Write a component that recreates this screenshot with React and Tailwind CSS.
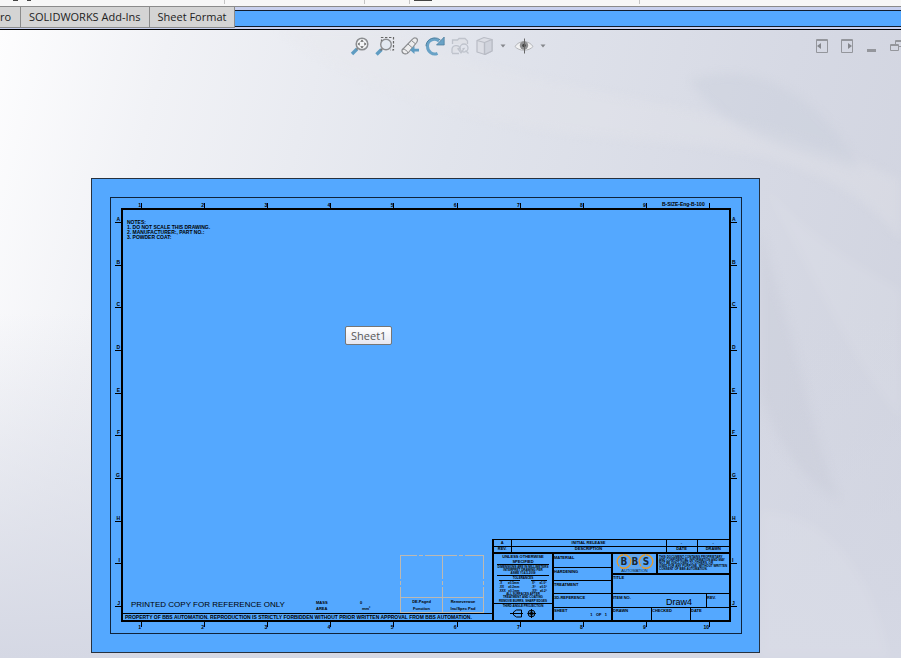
import React, { useState } from 'react';

const TABS = ['Evaluate Pro', 'SOLIDWORKS Add-Ins', 'Sheet Format'];
const COLUMNS = ['1', '2', '3', '4', '5', '6', '7', '8', '9', '10'];
const ROWS = ['A', 'B', 'C', 'D', 'E', 'F', 'G', 'H', 'I', 'J'];

const MATERIAL_FIELDS = [
  { label: 'MATERIAL', height: 'h-[14px]' },
  { label: 'HARDENING', height: 'h-[13px]' },
  { label: 'TREATMENT', height: 'h-[13px]' },
  { label: '3D-REFERENCE', height: 'h-[14px]' },
];

function ZoomFitIcon() {
  return (
    <svg width="20" height="20" viewBox="0 0 20 20" fill="none">
      <path d="M2 18l5-5" stroke="#5f9cc2" strokeWidth="3.4" />
      <path d="M6.5 13.5l2-2" stroke="#777" strokeWidth="1.6" />
      <circle cx="12" cy="8" r="5.8" fill="#f3f4f6" stroke="#8b8d90" strokeWidth="1.5" />
      <path d="M12 3.5l1.8 2.2h-3.6zM12 12.5l1.8-2.2h-3.6zM7.5 8l2.2-1.8v3.6zM16.5 8l-2.2-1.8v3.6z" fill="#666" />
    </svg>
  );
}

function ZoomAreaIcon() {
  return (
    <svg width="20" height="20" viewBox="0 0 20 20" fill="none">
      <path d="M6.5 6V1.5H18.5V14H15" stroke="#666" strokeWidth="1.2" strokeDasharray="2.4 1.6" />
      <path d="M1.5 18.5l5-5" stroke="#5f9cc2" strokeWidth="3.4" />
      <path d="M5.5 14.5l2-2" stroke="#777" strokeWidth="1.6" />
      <circle cx="11" cy="8.5" r="5.3" fill="#e3e9f2" stroke="#8b8d90" strokeWidth="1.4" />
    </svg>
  );
}

function PreviousViewIcon() {
  return (
    <svg width="20" height="20" viewBox="0 0 20 20" fill="none">
      <path d="M2 14L12.500 3.200C13.500 1.800 15 1.500 16.500 2.300c1.300 1 1.200 2.500.3 4L8.500 16.500C6.500 19 1.500 18 2 14z" fill="#ededee" stroke="#898b8e" strokeWidth="1.1" />
      <path d="M8 8l4 3.500M11.500 4.500l3.800 3.200M2.500 13c2.500 0 4.500 1.500 5.500 4" stroke="#898b8e" />
      <path d="M10 14l4.500-4v2.700H19v2.700h-4.500V18z" fill="#5f9cc2" />
    </svg>
  );
}

function RedrawIcon() {
  return (
    <svg width="20" height="20" viewBox="0 0 20 20" fill="none">
      <path d="M12.500 17.300C8 19.500 2.500 16 2.500 10.200 2.500 4.500 8.500 1.300 14 5" stroke="#69a2c6" strokeWidth="3" />
      <path d="M1 10.200C1 4.500 6.500 .8 12.500 2.300L15.500 4" stroke="#47799a" strokeWidth=".9" />
      <path d="M19.200 1v8h-7.700z" fill="#69a2c6" stroke="#47799a" strokeWidth=".7" />
    </svg>
  );
}

function SectionViewIcon() {
  return (
    <svg width="20" height="20" viewBox="0 0 20 20" fill="none" stroke="#bfc3cc" strokeWidth="1.3">
      <path d="M2.500 8V4h5l1.500-1.500h6L17.500 5v3" fill="#dfe1e7" />
      <path d="M2 17v-3.500c0-4.500 7-5.500 8-1l-2 .5 3 4 3-4.500-1.500.2" fill="#dfe1e7" />
      <circle cx="14" cy="12" r="4" />
      <path d="M15.500 14.500l3 3M2 17.500h7" />
    </svg>
  );
}

function DisplayStyleIcon() {
  return (
    <svg width="20" height="20" viewBox="0 0 20 20" stroke="#b9bcc5" strokeWidth="1.2" strokeLinejoin="round">
      <path d="M2 4.500L9 1.500l8 2V15l-7 3.500-8-2.500z" fill="#dcdee5" />
      <path d="M9.500 6.500L17 3.500V15l-7.500 3.500z" fill="#d0d3dc" />
      <path d="M2 4.500l7.500 2V18.500" fill="none" />
    </svg>
  );
}

function VisibilityIcon() {
  return (
    <svg width="20" height="20" viewBox="0 0 20 20">
      <path d="M1 10.500C5 4 15 4 19 10.500 15 15.500 5 15.500 1 10.500z" fill="#f1f1f2" stroke="#b4b6ba" />
      <circle cx="10" cy="9.500" r="4.200" fill="#8f9092" />
      <circle cx="10" cy="9.500" r="1.800" fill="#444" />
      <path d="M10.500 2.500v15" stroke="#666" />
    </svg>
  );
}

function Caret() {
  return (
    <svg width="6" height="4" viewBox="0 0 6 4">
      <path d="M.5 .5h5L3 3.500z" fill="#85878c" />
    </svg>
  );
}

function PaneIcon({ flip }) {
  return (
    <svg width="12" height="14" viewBox="0 0 12 14" fill="none">
      <path d="M.5 .5h11v13H.5z" stroke="#94969c" />
      <path d="M1 1.500h10" stroke="#94969c" />
      {flip ? <path d="M7 4v6l4-3z" fill="#85878d" /> : <path d="M5 4v6L1 7z" fill="#85878d" />}
    </svg>
  );
}

function HeadsUpToolbar() {
  return (
    <div className="flex items-center pr-[5px]" role="toolbar" aria-label="View">
      <div className="flex items-center gap-[5px]">
        <button aria-label="Zoom to Fit"><ZoomFitIcon /></button>
        <button aria-label="Zoom to Area"><ZoomAreaIcon /></button>
        <button aria-label="Previous View"><PreviousViewIcon /></button>
        <button aria-label="Redraw"><RedrawIcon /></button>
        <button aria-label="Section View"><SectionViewIcon /></button>
        <button aria-label="Display Style"><DisplayStyleIcon /></button>
      </div>
      <button aria-label="Display Style options" className="px-[5px] py-2"><Caret /></button>
      <button aria-label="Hide/Show Items" className="ml-[3px]"><VisibilityIcon /></button>
      <button aria-label="Hide/Show options" className="pl-[6px] py-2"><Caret /></button>
    </div>
  );
}

function WindowControls() {
  return (
    <div className="flex items-center justify-end gap-[13px] -mr-[7px]">
      <button aria-label="Collapse left pane"><PaneIcon /></button>
      <button aria-label="Collapse right pane"><PaneIcon flip /></button>
      <button aria-label="Minimize">
        <svg width="11" height="14" viewBox="0 0 11 14"><path d="M1 10h9v3H1z" fill="#94969c" /></svg>
      </button>
      <button aria-label="Restore">
        <svg width="18" height="14" viewBox="0 0 18 14" fill="none" stroke="#94969c">
          <path d="M.5 5.500h8v6h-8zM.5 6.500h8M5.500 5V1.500h12v6H9M5.500 2.500h12" />
        </svg>
      </button>
    </div>
  );
}

// Soft light streaks behind the sheet
function Backdrop() {
  return (
    <div className="absolute inset-0 overflow-hidden">
      <svg className="w-full h-full blur-[5px]" viewBox="0 0 901 628" preserveAspectRatio="none" fill="none">
        <path d="M280 0C360 60 480 100 640 110S860 160 901 210V150C820 110 740 90 640 70S440 30 400 0z" fill="#e6e6ea" opacity=".25" />
        <path d="M690 50c60-20 130 10 170 90-60-20-130-30-170-90z" fill="#c4c9d8" opacity=".3" />
        <path d="M760 150c50 90 90 180 141 240V260c-50-30-100-60-141-110z" fill="#fff" opacity=".08" />
        <path d="M760 200c40 120 50 200 80 270-40-20-65-60-80-110z" fill="#c2c6d4" opacity=".3" />
        <path d="M760 480c60 0 110 50 130 148H760z" fill="#fff" opacity=".08" />
      </svg>
    </div>
  );
}

// Zone marks along the top and bottom edge of the frame
function ColumnMarks({ bottom }) {
  return (
    <div className={bottom ? 'flex items-start' : 'flex items-end'}>
      {COLUMNS.map((c, i) => (
        <div key={c} className={`flex justify-end ${bottom ? 'items-start' : 'items-end'} ${i === 0 ? 'w-[21px] shrink-0' : 'flex-1'}`}>
          {!bottom && c === '10' ? (
            <span className="flex-1 pl-[15px] pb-px whitespace-nowrap">B-SIZE-Eng-B-100</span>
          ) : (
            <span className={bottom ? 'pt-[3px]' : ''}>{c}</span>
          )}
          <span className="w-px h-[5px] bg-black" />
        </div>
      ))}
      <div className="w-[21px] shrink-0" />
    </div>
  );
}

function RowMarks({ right }) {
  return (
    <div className="flex flex-col">
      {ROWS.map((r, i) => (
        <div key={r} className={`flex flex-col justify-end ${right ? 'items-start' : 'items-end'} ${i === 0 ? 'h-[15px] shrink-0' : 'flex-1'}`}>
          <span className="px-px">{r}</span>
          <span className="h-px w-[6px] bg-black" />
        </div>
      ))}
      <div className="h-[15px] shrink-0" />
    </div>
  );
}

function StampTable() {
  const gap = 'absolute bg-[#54a8ff]';
  return (
    <div className="relative">
      <table className="border-collapse text-center text-[4px] leading-[7px]">
        <tbody>
          <tr>
            <td className="w-[42px] h-[42px] p-0 border border-[#bdb9b2]" />
            <td className="w-[41px] h-[42px] p-0 border border-[#bdb9b2]" />
          </tr>
          <tr>
            <td className="h-[14px] p-0 border border-[#bdb9b2]">DE.Paged<br />Function</td>
            <td className="h-[14px] p-0 border border-[#bdb9b2]">Remeverwoe<br />Inc/Spec Pad</td>
          </tr>
        </tbody>
      </table>
      <span className={`${gap} left-[17px] top-0 w-[2px] h-px`} />
      <span className={`${gap} left-[23px] top-0 w-[2px] h-px`} />
      <span className={`${gap} left-[57px] top-0 w-[2px] h-px`} />
      <span className={`${gap} left-[63px] top-0 w-[2px] h-px`} />
      <span className={`${gap} left-0 top-[24px] w-full h-[2px]`} />
      <span className={`${gap} left-0 top-[30px] w-full h-[2px]`} />
    </div>
  );
}

function RevisionTable() {
  return (
    <table className="w-full table-fixed border-collapse text-center">
      <tbody>
        <tr className="h-[7px] border-t border-black">
          <td className="w-[17px] p-0 border-r border-black">A</td>
          <td className="p-0 border-r border-black">INITIAL RELEASE</td>
          <td className="w-[31px] p-0 border-r border-black">-</td>
          <td className="w-[32px] p-0">-</td>
        </tr>
        <tr className="h-[6px] border-t border-black">
          <th className="p-0 border-r border-black">REV.</th>
          <th className="p-0 border-r border-black">DESCRIPTION</th>
          <th className="p-0 border-r border-black">DATE</th>
          <th className="p-0">DRAWN</th>
        </tr>
      </tbody>
    </table>
  );
}

function Tolerances() {
  return (
    <div className="w-[60px] shrink-0 border-r-2 border-black flex flex-col items-center text-center whitespace-nowrap">
      <p className="pt-px">UNLESS OTHERWISE</p>
      <p className="leading-[5px]">SPECIFIED</p>
      <div className="w-[52px] h-px bg-black" />
      <p className="text-[3px] leading-[3px] pt-px">DIMENSIONS ARE IN MILLIMETERS</p>
      <p className="text-[3px] leading-[3px]">INTERPRET DRAWING PER</p>
      <p className="text-[3px] leading-[3px]">ASME Y14.5-2009</p>
      <div className="w-[52px] h-px bg-black" />
      <p className="text-[3px] leading-[4px]">TOLERANCES</p>
      <div className="flex w-full justify-between px-[5px] text-[3px] leading-[4px]">
        <p className="border-t border-black">.X &nbsp; &nbsp; &nbsp; ±0.5mm<br />.XX &nbsp; &nbsp; ±0.2mm<br />.XXX &nbsp; ±0.1mm</p>
        <p className="border-t border-black">X° &nbsp; &nbsp; ±1.0°<br />.X° &nbsp; &nbsp; ±0.5°<br />.XX° &nbsp; ±0.2°</p>
      </div>
      <p className="text-[3px] leading-[3px]">ALL SURFACES AFTER</p>
      <p className="text-[3px] leading-[3px]">TREATMENT AND COATING</p>
      <p className="text-[3px] leading-[4px]">REMOVE BURRS, SHARP EDGES</p>
      <div className="w-full h-px bg-black" />
      <p className="text-[3px] leading-[5px]">THIRD ANGLE PROJECTION</p>
      <svg width="26" height="9" viewBox="0 0 26 9" fill="none" stroke="#000" className="shrink-0">
        <path d="M3.500 3l3-2h5v7h-5l-3-2zM0 4.500h13M17.500 4.500H26M21.500 0v9" />
        <circle cx="21.500" cy="4.500" r="3.400" />
        <circle cx="21.500" cy="4.500" r="1.700" />
      </svg>
    </div>
  );
}

function BbsLogo() {
  return (
    <div className="flex flex-col items-center">
      <svg width="38" height="15" viewBox="0 0 38 15" fill="none" fontFamily="'DejaVu Sans Condensed', 'Liberation Sans', sans-serif" fontSize="10" textAnchor="middle">
        <circle cx="19" cy="7.500" r="6.500" stroke="#7fa5cb" strokeWidth="1.2" />
        <circle cx="8" cy="7.500" r="6.800" stroke="#e59a2a" strokeWidth="1.400" strokeDasharray="15 1" />
        <circle cx="30" cy="7.500" r="6.800" stroke="#e59a2a" strokeWidth="1.400" strokeDasharray="15 1" />
        <text x="8" y="11" fill="#1d2833">B</text>
        <text x="19" y="11" fill="#1d2833">B</text>
        <text x="30" y="11" fill="#1d2833">S</text>
      </svg>
      <span className="leading-[4px] font-normal text-[#10202f]">AUTOMATION</span>
    </div>
  );
}

function TitleBlock() {
  return (
    <div className="w-[237px] shrink-0 border-l-2 border-black">
      <RevisionTable />
      <div className="flex h-[68px] border-t-2 border-black">
        <Tolerances />
        <div className="w-[59px] shrink-0 border-r-2 border-black flex flex-col">
          {MATERIAL_FIELDS.map(f => (
            <div key={f.label} className={`${f.height} border-b border-black pt-[2px]`}>{f.label}</div>
          ))}
          <div className="flex flex-1 flex-col justify-between pt-px">
            <span>SHEET</span>
            <span className="self-end pr-1 pb-[3px]">1 &nbsp; OF &nbsp; 1</span>
          </div>
        </div>
        <div className="flex-1 min-w-0 flex flex-col">
          <div className="flex h-[21px] border-b-2 border-black">
            <div className="w-[45px] shrink-0 border-r-2 border-black flex justify-center"><BbsLogo /></div>
            <p className="flex-1 pl-px pt-[2px] text-[3px] leading-[3px] whitespace-nowrap">
              THIS DOCUMENT CONTAINS PROPRIETARY<br />
              AND CONFIDENTIAL INFORMATION AND MAY<br />
              NOT BE DISCLOSED TO OTHERS, OR<br />
              USED FOR ANY PURPOSE, WITHOUT WRITTEN<br />
              CONSENT OF BBS AUTOMATION.
            </p>
          </div>
          <div className="h-[19px] border-b border-black pt-px">TITLE</div>
          <div className="flex h-[14px] border-b border-black">
            <div className="flex-1 flex justify-between items-end pr-[14px]">
              <span className="self-start pt-[2px]">ITEM NO.</span>
              <span className="text-[9px] leading-[10px] font-normal">Draw4</span>
            </div>
            <div className="w-[23px] shrink-0 border-l border-black pt-[2px]">REV.</div>
          </div>
          <div className="flex flex-1">
            <div className="w-[39px] pt-px border-r border-black">DRAWN</div>
            <div className="w-[39px] pt-px border-r border-black">CHECKED</div>
            <div className="flex-1 pt-px">DATE</div>
          </div>
        </div>
      </div>
    </div>
  );
}

function Sheet() {
  return (
    <section className="relative ml-[91px] mr-[141px] border border-[#26313f] bg-[#54a8ff] p-[18px] pr-[17px] text-black font-bold text-[4px] leading-[4px]">
      <div className="border border-[#10233a] grid grid-cols-[10px_minmax(0,1fr)_10px] grid-rows-[10px_minmax(414px,1fr)_11px] text-[5px] leading-[5px]">
        <div />
        <ColumnMarks />
        <div />
        <RowMarks />
        <div className="relative border-2 border-black flex flex-col justify-between text-[4px] leading-[4px]">
          <div className="pl-[4px] pt-[10px] text-[5px] leading-[5px]">
            <p>NOTES:</p>
            <ol className="list-none">
              <li>1. DO NOT SCALE THIS DRAWING.</li>
              <li>2. MANUFACTURER:, PART NO.:</li>
              <li>3. POWDER COAT:</li>
            </ol>
          </div>
          <div className="flex items-end">
            <div className="flex-1 min-w-0">
              <div className="flex items-end pl-[8px] pr-[8px]">
                <p className="text-[8px] leading-[10px] pb-[3px] font-normal whitespace-nowrap">PRINTED COPY FOR REFERENCE ONLY</p>
                <dl className="ml-auto mr-[24px] grid grid-cols-[40px_20px] leading-[6px] pb-px">
                  <dt>MASS</dt>
                  <dd className="pl-1">0</dd>
                  <dt>AREA</dt>
                  <dd className="pl-[6px]">mm²</dd>
                </dl>
                <StampTable />
              </div>
              <p className="h-[7px] border-t border-black pl-[2px] text-[5px] leading-[6px] whitespace-nowrap">
                PROPERTY OF BBS AUTOMATION. REPRODUCTION IS STRICTLY FORBIDDEN WITHOUT PRIOR WRITTEN APPROVAL FROM BBS AUTOMATION.
              </p>
            </div>
            <TitleBlock />
          </div>
          <div role="tooltip" className="absolute left-[222px] top-[116px] h-[19px] px-[5px] rounded-[2px] border border-[#767676] bg-linear-to-b from-white to-[#e6e7f1] text-[11px] leading-[17px] font-normal text-[#575757] font-['Open_Sans',sans-serif]">
            Sheet1
          </div>
        </div>
        <RowMarks right />
        <div />
        <ColumnMarks bottom />
        <div />
      </div>
    </section>
  );
}

export default function App() {
  const [tab, setTab] = useState('Sheet Format');

  return (
    <div className="min-h-screen flex flex-col overflow-hidden font-['Liberation_Sans',Arial,sans-serif]">
      {/* Lower edge of the ribbon */}
      <div className="h-[6px] shrink-0 bg-[#f7f7f7] flex items-start">
        <span className="ml-[13px] w-[5px] h-px bg-[#444]" />
        <span className="ml-[9px] w-[4px] h-px bg-[#444]" />
        <span className="ml-[193px] w-px h-[4px] bg-[#c4c4c4]" />
        <span className="ml-[139px] w-px h-[4px] bg-[#c4c4c4]" />
        <span className="ml-[44px] w-px h-[4px] bg-[#c4c4c4]" />
        <span className="ml-[4px] w-[18px] h-px bg-[#444]" />
        <span className="ml-[207px] w-px h-[4px] bg-[#c4c4c4]" />
      </div>

      <div className="h-[24px] shrink-0 flex items-start border-t border-b border-t-[#8b8b8b] border-b-black bg-[#c8d0ee]">
        <div role="tablist" className="flex h-[21px] border-b border-[#8b8b8b] text-[11px] leading-[20px] text-[#222] font-['Open_Sans',sans-serif]">
          {TABS.map((t, i) => (
            <button key={t} role="tab" aria-label={t} aria-selected={tab === t} onClick={() => setTab(t)}
              className={`bg-[#d4d4d4] border-r border-[#8b8b8b] whitespace-nowrap ${i === 0 ? 'w-[21px] text-left' : 'px-[8px]'}`}>
              {i === 0 ? 'ro' : t}
            </button>
          ))}
        </div>
        <div className="flex-1 mt-[3px] h-[17px] bg-[#54a8ff] border-t border-b border-[#111c2c]" />
      </div>

      <main className="relative flex-1 flex flex-col pb-[5px] bg-[linear-gradient(180deg,transparent_45%,#d5d8e4_100%),linear-gradient(105deg,#fdfdfe_0%,#f1f2f6_16%,#e1e4ec_45%,#d6d9e4_75%,#cfd2de_100%)]">
        <Backdrop />
        <div className="relative grid grid-cols-[1fr_auto_1fr] items-center h-[32px] mb-[116px]">
          <div />
          <HeadsUpToolbar />
          <WindowControls />
        </div>
        <Sheet />
      </main>
    </div>
  );
}
